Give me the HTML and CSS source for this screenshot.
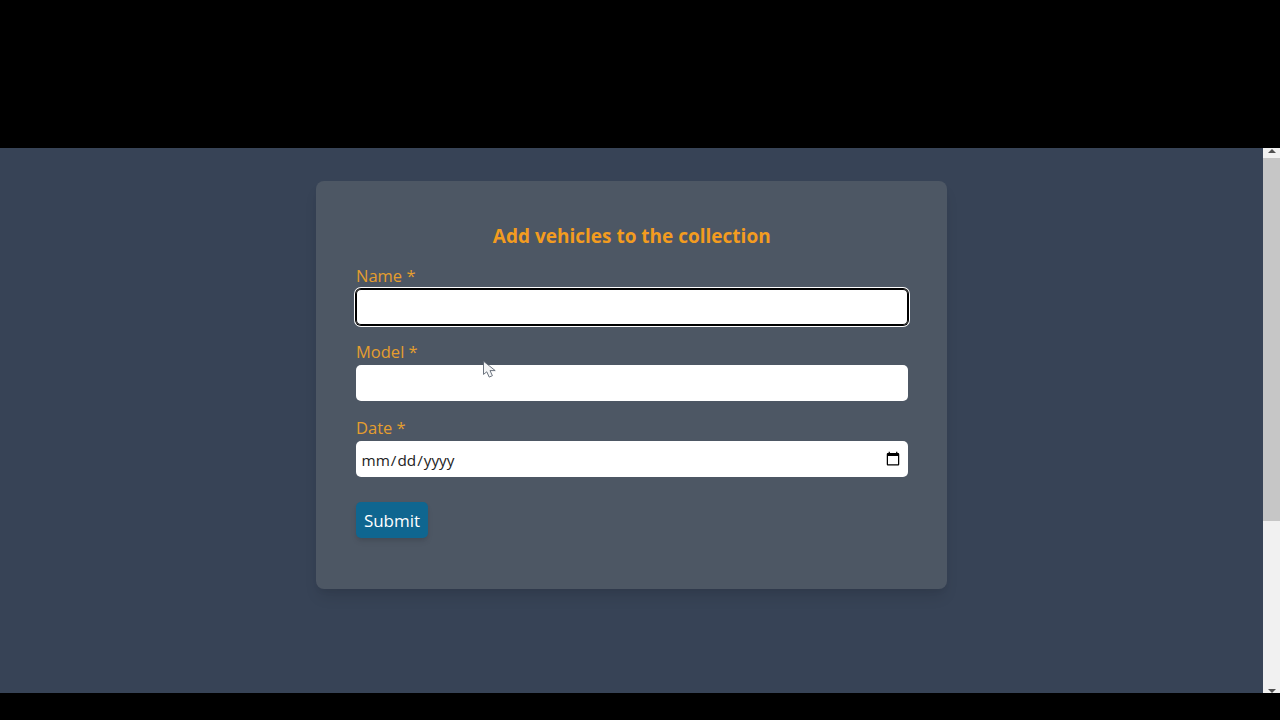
FILE: index.html
```html
<!DOCTYPE html>
<html lang="en">
<head>
  <meta charset="UTF-8">
  <title>Add vehicles</title>
  <link rel="stylesheet" href="styles.css">
</head>
<body>
<div class="bar-top"></div>
<div class="screen">
  <main class="page">
    <form class="card">
      <h1>Add vehicles to the collection</h1>
      <div class="field">
        <label for="name">Name *</label>
        <input id="name" class="is-focused" type="text">
      </div>
      <div class="field">
        <label for="model">Model *</label>
        <input id="model" type="text">
      </div>
      <div class="field">
        <label for="date">Date *</label>
        <input id="date" type="date">
      </div>
      <button type="button">Submit</button>
    </form>
  </main>
  <div class="scrollbar">
    <div class="arrow arrow-up"></div>
    <div class="track"><div class="thumb"></div></div>
    <div class="arrow arrow-down"></div>
  </div>
  <svg class="pointer" width="15" height="19" viewBox="0 0 15 19">
    <path d="M1.5 1.2v13.2l3.3-2.6 2.4 5.3 3.2-1.4-2.4-5.1h5.2z" fill="#f4f5f6" stroke="#5b6470" stroke-width="0.9"/>
  </svg>
</div>
<div class="bar-bottom"></div>
</body>
</html>
```

FILE: styles.css
```css
html, body { height: 100%; }
body { margin: 0; background: #000; display: flex; flex-direction: column; overflow: hidden; font-family: "Open Sans", "Noto Sans", Arial, sans-serif; }
.bar-top { height: 148px; background: #000; }
.bar-bottom { height: 27px; background: #000; }
.screen { position: relative; flex: 1; display: flex; min-height: 0; background: #374356; }
.page { flex: 1; display: flex; justify-content: center; align-items: flex-start; padding-top: 33px; }
.card { width: 631px; height: 408px; box-sizing: border-box; padding: 40px 39.5px 0 40px; background: #4d5764; border-radius: 8px; box-shadow: 0 10px 15px -3px #0000001a, 0 4px 6px -2px #0000000d; }
h1 { margin: 0 0 14px; height: 30px; line-height: 30px; text-align: center; font-size: 19px; font-weight: 700; color: #f39c1f; }
.field { margin-bottom: 16px; }
label { display: block; height: 24px; line-height: 22px; font-size: 16.5px; color: #e59e2e; }
input { display: block; width: 100%; height: 36px; box-sizing: border-box; padding: 2px 5px 0 4.5px; border: 0; border-radius: 5px; background: #fff; color: #222; font-family: inherit; font-size: 15.3px; }
input::-webkit-calendar-picker-indicator { margin-top: -2px; }
input.is-focused { outline: 0; box-shadow: inset 0 0 0 1px #000, 0 0 0 1px #000, 0 0 0 2px #fff; }
button { display: block; margin-top: 25px; width: 72px; height: 36px; padding: 0; border: 0; border-radius: 5px; background: #0f6690; color: #fff; font-family: inherit; font-size: 17px; box-shadow: 0 4px 6px -1px #0000001a, 0 2px 4px -1px #0000000f; }
.scrollbar { width: 17px; display: flex; flex-direction: column; background: #f1f1f1; }
.track { flex: 1; }
.thumb { height: 363px; background: #c6c6c6; }
.arrow { height: 10px; display: flex; justify-content: center; }
.arrow-up::before { content: ""; margin-top: 1px; border: 4px solid transparent; border-top: 0; border-bottom-color: #505050; height: 0; }
.arrow-down { align-items: flex-end; }
.arrow-down::before { content: ""; border: 4px solid transparent; border-bottom: 0; border-top-color: #505050; height: 0; }
.pointer { position: absolute; left: 482px; top: 212px; }
```
